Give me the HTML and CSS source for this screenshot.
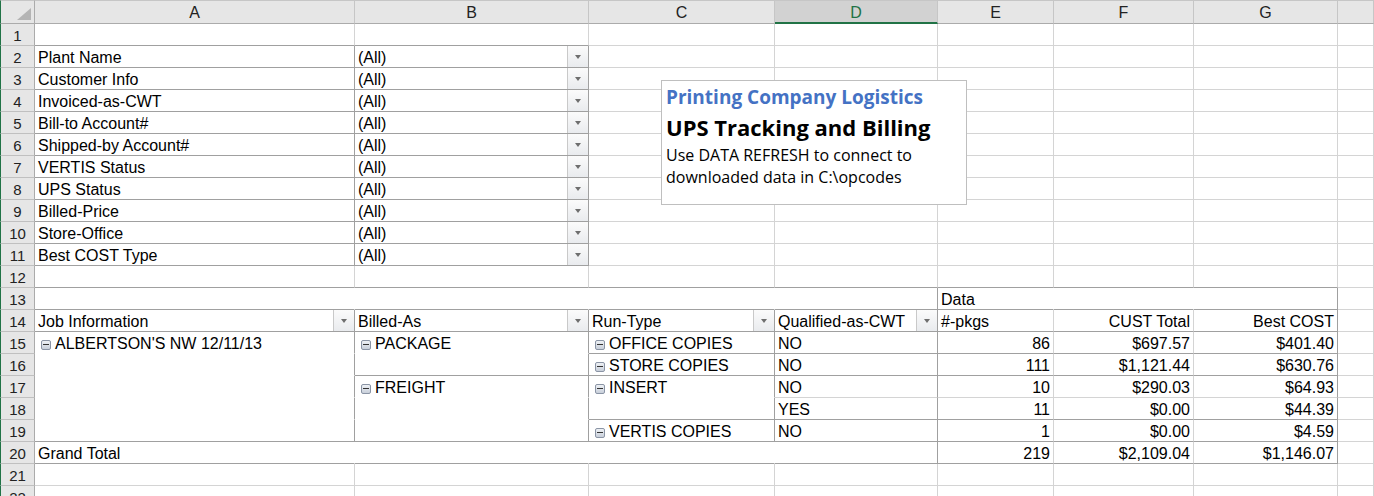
FILE: index.html
```html
<!DOCTYPE html>
<html lang="en">
<head>
    <meta charset="UTF-8">
    <title>UPS Tracking and Billing</title>
    <link rel="stylesheet" href="styles.css">
</head>
<body>
<div class="sheet">
    <!-- column letters -->
    <div class="row head">
        <div class="rh corner"><svg width="16" height="13" viewBox="0 0 16 13"><polygon points="15,0 15,12 1,12" fill="#b4b4b4"/></svg></div>
        <div class="ch">A</div>
        <div class="ch">B</div>
        <div class="ch">C</div>
        <div class="ch sel">D</div>
        <div class="ch">E</div>
        <div class="ch">F</div>
        <div class="ch">G</div>
        <div class="ch"></div>
    </div>

    <div class="row">
        <div class="rh">1</div>
        <div class="c pb"></div><div class="c pb"></div><div class="c"></div><div class="c"></div><div class="c"></div><div class="c"></div><div class="c"></div><div class="c"></div>
    </div>

    <!-- report filters -->
    <div class="row">
        <div class="rh">2</div>
        <div class="c pb pr">Plant Name</div>
        <div class="c pb pr dd"><span class="t">(All)</span><span class="btn"></span></div>
        <div class="c"></div><div class="c"></div><div class="c"></div><div class="c"></div><div class="c"></div><div class="c"></div>
    </div>
    <div class="row">
        <div class="rh">3</div>
        <div class="c pb pr">Customer Info</div>
        <div class="c pb pr dd"><span class="t">(All)</span><span class="btn"></span></div>
        <div class="c"></div><div class="c"></div><div class="c"></div><div class="c"></div><div class="c"></div><div class="c"></div>
    </div>
    <div class="row">
        <div class="rh">4</div>
        <div class="c pb pr">Invoiced-as-CWT</div>
        <div class="c pb pr dd"><span class="t">(All)</span><span class="btn"></span></div>
        <div class="c"></div><div class="c"></div><div class="c"></div><div class="c"></div><div class="c"></div><div class="c"></div>
    </div>
    <div class="row">
        <div class="rh">5</div>
        <div class="c pb pr">Bill-to Account#</div>
        <div class="c pb pr dd"><span class="t">(All)</span><span class="btn"></span></div>
        <div class="c"></div><div class="c"></div><div class="c"></div><div class="c"></div><div class="c"></div><div class="c"></div>
    </div>
    <div class="row">
        <div class="rh">6</div>
        <div class="c pb pr">Shipped-by Account#</div>
        <div class="c pb pr dd"><span class="t">(All)</span><span class="btn"></span></div>
        <div class="c"></div><div class="c"></div><div class="c"></div><div class="c"></div><div class="c"></div><div class="c"></div>
    </div>
    <div class="row">
        <div class="rh">7</div>
        <div class="c pb pr">VERTIS Status</div>
        <div class="c pb pr dd"><span class="t">(All)</span><span class="btn"></span></div>
        <div class="c"></div><div class="c"></div><div class="c"></div><div class="c"></div><div class="c"></div><div class="c"></div>
    </div>
    <div class="row">
        <div class="rh">8</div>
        <div class="c pb pr">UPS Status</div>
        <div class="c pb pr dd"><span class="t">(All)</span><span class="btn"></span></div>
        <div class="c"></div><div class="c"></div><div class="c"></div><div class="c"></div><div class="c"></div><div class="c"></div>
    </div>
    <div class="row">
        <div class="rh">9</div>
        <div class="c pb pr">Billed-Price</div>
        <div class="c pb pr dd"><span class="t">(All)</span><span class="btn"></span></div>
        <div class="c"></div><div class="c"></div><div class="c"></div><div class="c"></div><div class="c"></div><div class="c"></div>
    </div>
    <div class="row">
        <div class="rh">10</div>
        <div class="c pb pr">Store-Office</div>
        <div class="c pb pr dd"><span class="t">(All)</span><span class="btn"></span></div>
        <div class="c"></div><div class="c"></div><div class="c"></div><div class="c"></div><div class="c"></div><div class="c"></div>
    </div>
    <div class="row">
        <div class="rh">11</div>
        <div class="c pb pr">Best COST Type</div>
        <div class="c pb pr dd"><span class="t">(All)</span><span class="btn"></span></div>
        <div class="c"></div><div class="c"></div><div class="c"></div><div class="c"></div><div class="c"></div><div class="c"></div>
    </div>

    <div class="row">
        <div class="rh">12</div>
        <div class="c pb"></div><div class="c pb"></div><div class="c pb"></div><div class="c pb"></div><div class="c pb"></div><div class="c pb"></div><div class="c pb"></div><div class="c"></div>
    </div>

    <!-- pivot table -->
    <div class="row">
        <div class="rh">13</div>
        <div class="c pb nr"></div><div class="c pb nr"></div><div class="c pb nr"></div><div class="c pb pr"></div>
        <div class="c pb nr">Data</div><div class="c pb nr"></div><div class="c pb pr"></div>
        <div class="c"></div>
    </div>
    <div class="row">
        <div class="rh">14</div>
        <div class="c pb pr dd"><span class="t">Job Information</span><span class="btn"></span></div>
        <div class="c pb pr dd"><span class="t">Billed-As</span><span class="btn"></span></div>
        <div class="c pb pr dd"><span class="t">Run-Type</span><span class="btn"></span></div>
        <div class="c pb pr dd"><span class="t">Qualified-as-CWT</span><span class="btn"></span></div>
        <div class="c pb">#-pkgs</div>
        <div class="c pb num">CUST Total</div>
        <div class="c pb pr num">Best COST</div>
        <div class="c"></div>
    </div>
    <div class="row">
        <div class="rh">15</div>
        <div class="c nb pr"><i class="tog"></i>ALBERTSON'S NW 12/11/13</div>
        <div class="c nb pr"><i class="tog"></i>PACKAGE</div>
        <div class="c pb pr"><i class="tog"></i>OFFICE COPIES</div>
        <div class="c pb pr">NO</div>
        <div class="c pb num">86</div>
        <div class="c pb num">$697.57</div>
        <div class="c pb pr num">$401.40</div>
        <div class="c"></div>
    </div>
    <div class="row">
        <div class="rh">16</div>
        <div class="c nb pr"></div>
        <div class="c pb pr"></div>
        <div class="c pb pr"><i class="tog"></i>STORE COPIES</div>
        <div class="c pb pr">NO</div>
        <div class="c pb num">111</div>
        <div class="c pb num">$1,121.44</div>
        <div class="c pb pr num">$630.76</div>
        <div class="c"></div>
    </div>
    <div class="row">
        <div class="rh">17</div>
        <div class="c nb pr"></div>
        <div class="c nb pr"><i class="tog"></i>FREIGHT</div>
        <div class="c nb pr"><i class="tog"></i>INSERT</div>
        <div class="c pr">NO</div>
        <div class="c num">10</div>
        <div class="c num">$290.03</div>
        <div class="c pr num">$64.93</div>
        <div class="c"></div>
    </div>
    <div class="row">
        <div class="rh">18</div>
        <div class="c nb pr"></div>
        <div class="c nb pr"></div>
        <div class="c pb pr"></div>
        <div class="c pb pr">YES</div>
        <div class="c pb num">11</div>
        <div class="c pb num">$0.00</div>
        <div class="c pb pr num">$44.39</div>
        <div class="c"></div>
    </div>
    <div class="row">
        <div class="rh">19</div>
        <div class="c pb pr"></div>
        <div class="c pb pr"></div>
        <div class="c pb pr"><i class="tog"></i>VERTIS COPIES</div>
        <div class="c pb pr">NO</div>
        <div class="c pb num">1</div>
        <div class="c pb num">$0.00</div>
        <div class="c pb pr num">$4.59</div>
        <div class="c"></div>
    </div>
    <div class="row">
        <div class="rh">20</div>
        <div class="c pb nr">Grand Total</div><div class="c pb nr"></div><div class="c pb nr"></div><div class="c pb pr"></div>
        <div class="c pb num">219</div>
        <div class="c pb num">$2,109.04</div>
        <div class="c pb pr num">$1,146.07</div>
        <div class="c"></div>
    </div>

    <div class="row">
        <div class="rh">21</div>
        <div class="c"></div><div class="c"></div><div class="c"></div><div class="c"></div><div class="c"></div><div class="c"></div><div class="c"></div><div class="c"></div>
    </div>
    <div class="row">
        <div class="rh">22</div>
        <div class="c"></div><div class="c"></div><div class="c"></div><div class="c"></div><div class="c"></div><div class="c"></div><div class="c"></div><div class="c"></div>
    </div>

    <!-- floating text box -->
    <div class="note">
        <div class="note-sub">Printing Company Logistics</div>
        <div class="note-title">UPS Tracking and Billing</div>
        <div class="note-body">Use DATA REFRESH to connect to<br>downloaded data in C:\opcodes</div>
    </div>
</div>
</body>
</html>
```

FILE: styles.css
```css
body {
    margin: 0;
    background: #fff;
    overflow: hidden;
    font-family: "Liberation Sans", Arial, sans-serif;
    font-size: 16px;
    color: #000;
}

.sheet {
    position: relative;
    width: 1374px;
    height: 496px;
    overflow: hidden;
}

.row {
    display: grid;
    grid-template-columns: 35px 320px 234px 186px 163px 116px 140px 144px 36px;
    height: 22px;
}

.row.head {
    height: 24px;
}

/* column letters */
.ch {
    box-sizing: border-box;
    height: 24px;
    padding-top: 2px;
    line-height: 20px;
    text-align: center;
    font-size: 16px;
    background: #e6e6e6;
    border-top: 1px solid #c6c6c6;
    border-right: 1px solid #c6c6c6;
    border-bottom: 1px solid #ababab;
    color: #222;
}

.ch.sel {
    background: #d2d2d2;
    color: #217346;
    border-bottom: 2px solid #217346;
}

/* row numbers */
.rh {
    box-sizing: border-box;
    height: 22px;
    padding-top: 2px;
    line-height: 19px;
    text-align: center;
    font-size: 15px;
    background: #e6e6e6;
    border-left: 1px solid #217346;
    border-right: 1px solid #ababab;
    border-bottom: 1px solid #c0c0c0;
    color: #222;
}

.rh.corner {
    height: 24px;
    padding: 0;
    border-top: 1px solid #c6c6c6;
    border-bottom: 1px solid #ababab;
    display: flex;
    align-items: flex-end;
    justify-content: flex-end;
}

.rh.corner svg {
    display: block;
    margin: 0 2px 2px 0;
}

/* cells */
.c {
    box-sizing: border-box;
    height: 22px;
    padding: 2px 3px 0;
    line-height: 19px;
    white-space: nowrap;
    overflow: hidden;
    border-right: 1px solid #d4d4d4;
    border-bottom: 1px solid #d4d4d4;
}

.c.pb { border-bottom-color: #a0a0a0; }
.c.pr { border-right-color: #a0a0a0; }
.c.nb { border-bottom-color: #fff; }
.c.nr { border-right-color: #fff; }

.c.num {
    text-align: right;
}

/* cell with a filter button */
.c.dd {
    display: flex;
    padding-right: 0;
}

.c.dd .t {
    flex: 1;
    overflow: hidden;
}

.btn {
    position: relative;
    box-sizing: border-box;
    width: 21px;
    height: 21px;
    margin-top: -2px;
    border-left: 1px solid #c9c9c9;
    background: linear-gradient(#fbfbfb, #e9ebee);
}

.btn::after {
    content: "";
    position: absolute;
    left: 7px;
    top: 9px;
    border-left: 3px solid transparent;
    border-right: 3px solid transparent;
    border-top: 4px solid #6e6e6e;
}

/* collapse toggle */
.tog {
    display: inline-block;
    box-sizing: border-box;
    width: 10px;
    height: 10px;
    margin: 0 4px 0 3px;
    vertical-align: -1px;
    border: 1px solid #8a94a5;
    border-radius: 2px;
    background: linear-gradient(#eef1f5, #c8cfda);
    position: relative;
}

.tog::after {
    content: "";
    position: absolute;
    left: 1px;
    right: 1px;
    top: 3px;
    height: 1px;
    background: #333;
}

/* text box over the grid */
.note {
    position: absolute;
    left: 661px;
    top: 80px;
    width: 306px;
    height: 125px;
    box-sizing: border-box;
    padding: 3px 0 0 4px;
    border: 1px solid #bfbfbf;
    background: #fff;
    font-family: "Open Sans", Lato, sans-serif;
    white-space: nowrap;
}

.note-sub {
    font-size: 19px;
    line-height: 26px;
    font-weight: bold;
    color: #4472c4;
}

.note-title {
    font-size: 22px;
    line-height: 34px;
    font-weight: bold;
    color: #000;
}

.note-body {
    margin-top: 1px;
    font-size: 16px;
    line-height: 21.6px;
    color: #000;
}
```
